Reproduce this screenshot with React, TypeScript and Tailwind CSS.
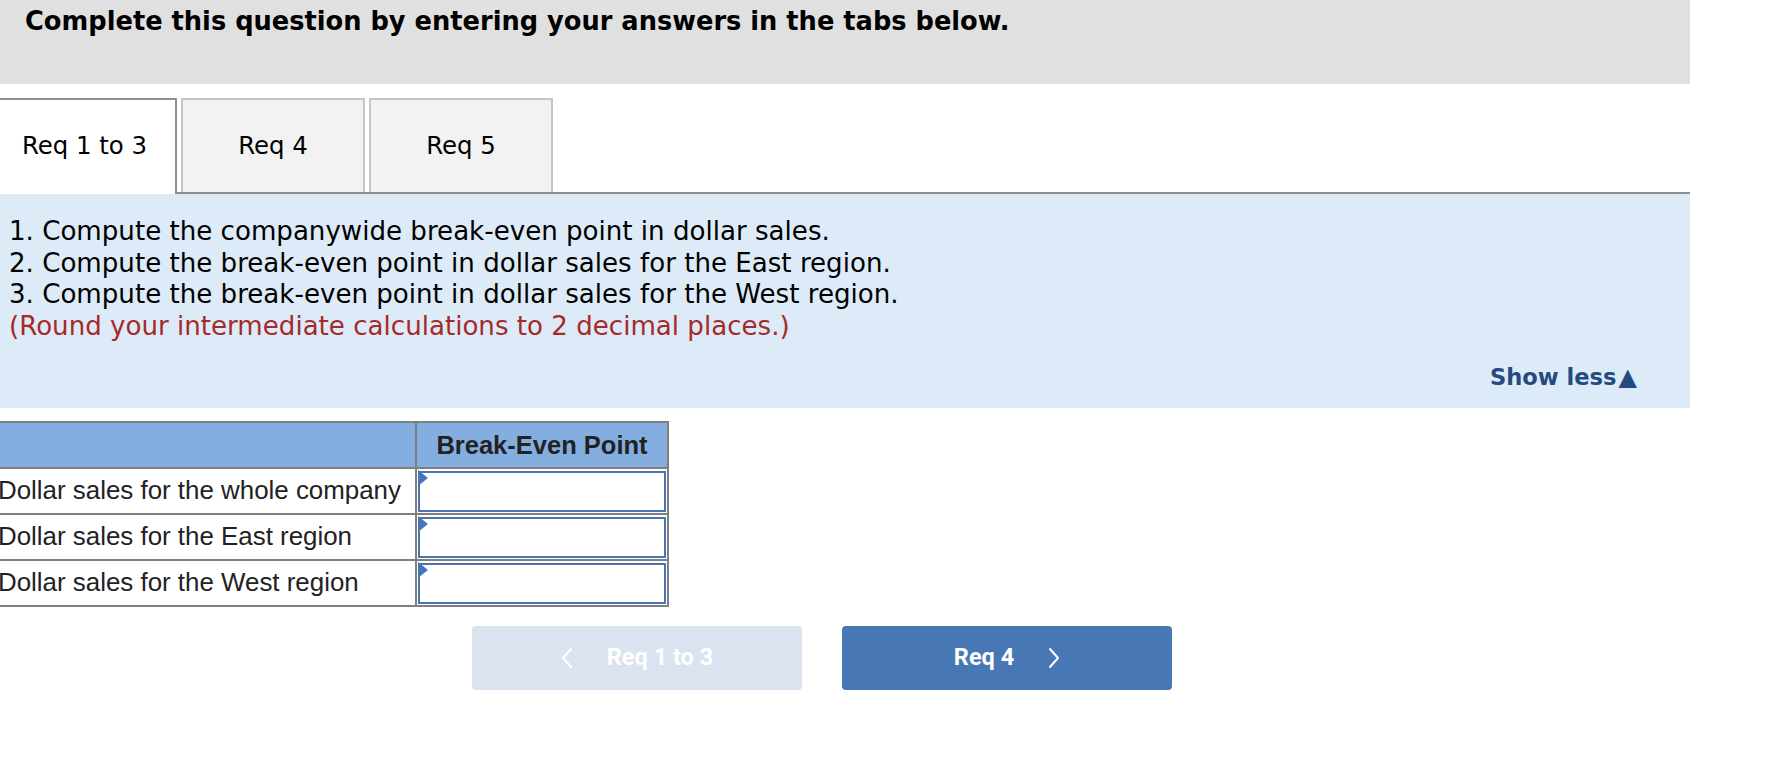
import { useState } from "react";

type Tab = { id: string; label: string };

const tabs: Tab[] = [
  { id: "r13", label: "Req 1 to 3" },
  { id: "r4", label: "Req 4" },
  { id: "r5", label: "Req 5" },
];

const rows = [
  "Dollar sales for the whole company",
  "Dollar sales for the East region",
  "Dollar sales for the West region",
];

function Chevron({ dir }: { dir: "left" | "right" }) {
  return (
    <svg width="12" height="22" viewBox="0 0 12 22" fill="none" aria-hidden>
      <polyline
        points={dir === "left" ? "10,2 2,11 10,20" : "2,2 10,11 2,20"}
        stroke="currentColor"
        strokeWidth="2"
        strokeLinecap="round"
        strokeLinejoin="round"
      />
    </svg>
  );
}

function AnswerCell() {
  return (
    <td className="border-2 border-[#7f7f7f] p-px">
      <div className="relative h-[41px] border-2 border-[#4a74b3] bg-white">
        {/* little marker on the top-left corner */}
        <span className="absolute -left-[2px] -top-[3px] h-0 w-0 border-y-[8px] border-l-[10px] border-y-transparent border-l-[#4675b8]" />
      </div>
    </td>
  );
}

export default function App() {
  const [active, setActive] = useState("r13");

  return (
    <div className="min-h-screen w-full bg-white font-['DejaVu_Sans',sans-serif] text-black">
      <div className="w-[1690px]">
        {/* header */}
        <div className="h-[84px] bg-[#e0e0e0] pl-[25px] pt-[5px]">
          <h1 className="text-[25.7px] font-bold leading-[32px]">
            Complete this question by entering your answers in the tabs below.
          </h1>
        </div>

        {/* tabs */}
        <div className="mt-[14px] flex items-end gap-[4px] border-b-2 border-[#8f8f8f]">
          {tabs.map((t) =>
            t.id === active ? (
              <button
                key={t.id}
                onClick={() => setActive(t.id)}
                className="relative -mb-[2px] flex h-[96px] w-[177px] items-center justify-center border-r-2 border-t-2 border-[#8f8f8f] bg-white pb-[2px] pr-[6px] text-[24.4px]"
              >
                {t.label}
              </button>
            ) : (
              <button
                key={t.id}
                onClick={() => setActive(t.id)}
                className="flex h-[94px] w-[184px] items-center justify-center border-2 border-b-0 border-[#c6c6c6] bg-[#f2f2f2] text-[24.4px]"
              >
                {t.label}
              </button>
            )
          )}
        </div>

        {/* instructions */}
        <div className="h-[214px] bg-[#ddebf8] pl-[9px] pr-[53px] pt-[22px] text-[26.1px] leading-[31.5px]">
          <p>1. Compute the companywide break-even point in dollar sales.</p>
          <p>2. Compute the break-even point in dollar sales for the East region.</p>
          <p>3. Compute the break-even point in dollar sales for the West region.</p>
          <p className="text-[#a52a2a]">(Round your intermediate calculations to 2 decimal places.)</p>
          <div className="mt-[23px] flex justify-end">
            <button className="flex items-center text-[22.6px] font-bold leading-none text-[#234b82]">
              Show less
              <span className="ml-[2px] text-[24px] leading-none">▲</span>
            </button>
          </div>
        </div>

        {/* answer table */}
        <table className="mt-[13px] w-[669px] border-collapse font-['Liberation_Sans',Arial,sans-serif] text-[#222]">
          <thead>
            <tr className="h-[46px] bg-[#84aee0]">
              <th className="w-[416px] border-2 border-l-0 border-[#7f7f7f]" />
              <th className="border-2 border-[#7f7f7f] text-center text-[25.5px] font-bold">
                Break-Even Point
              </th>
            </tr>
          </thead>
          <tbody>
            {rows.map((r) => (
              <tr key={r} className="h-[46px]">
                <td className="overflow-hidden border-2 border-l-0 border-[#7f7f7f] text-[25.9px] leading-none">
                  <span className="-ml-[2px] block whitespace-nowrap">{r}</span>
                </td>
                <AnswerCell />
              </tr>
            ))}
          </tbody>
        </table>

        {/* prev / next */}
        <div className="ml-[472px] mt-[19px] flex gap-[40px] font-['Roboto',sans-serif] text-[23.5px] font-bold text-white">
          <button className="flex h-[64px] w-[330px] items-center justify-center gap-[34px] rounded-[4px] bg-[#dae3ef]">
            <Chevron dir="left" />
            <span>Req 1 to 3</span>
          </button>
          <button className="flex h-[64px] w-[330px] items-center justify-center gap-[34px] rounded-[4px] bg-[#4777b4]">
            <span>Req 4</span>
            <Chevron dir="right" />
          </button>
        </div>
      </div>
    </div>
  );
}
